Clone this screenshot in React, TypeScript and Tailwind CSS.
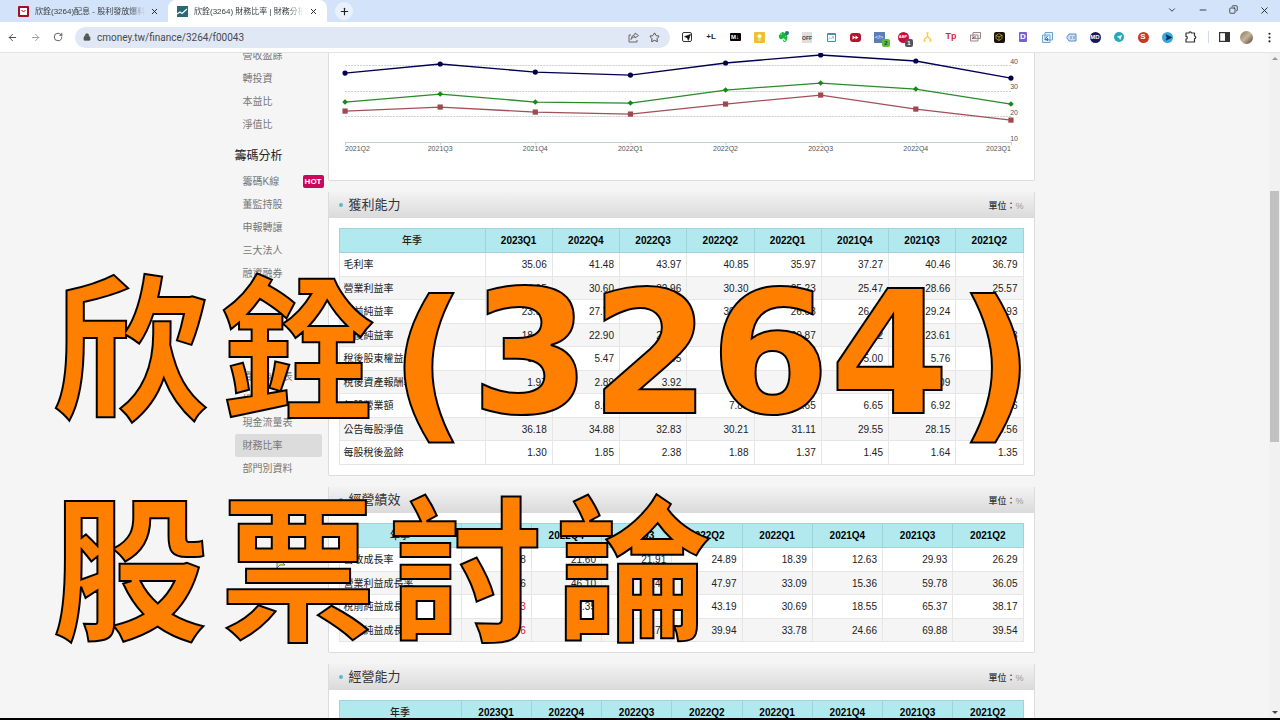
import type { ReactNode } from "react";
import {
  ArrowLeft, ArrowRight, RotateCw, Lock, Star, X, Plus, Minus, ChevronDown, Copy,
  EllipsisVertical, Send, Lightbulb, TrendingUp, Box,
} from "lucide-react";
import { SiEvernote } from "react-icons/si";

const quarters = ["2023Q1", "2022Q4", "2022Q3", "2022Q2", "2022Q1", "2021Q4", "2021Q3", "2021Q2"];

type Row = [string, ...string[]];

const profitability: Row[] = [
  ["毛利率", "35.06", "41.48", "43.97", "40.85", "35.97", "37.27", "40.46", "36.79"],
  ["營業利益率", "24.65", "30.60", "32.96", "30.30", "25.23", "25.47", "28.66", "25.57"],
  ["稅前純益率", "23.96", "27.74", "34.74", "30.47", "26.03", "26.40", "29.24", "26.93"],
  ["稅後純益率", "18.43", "22.90", "28.27", "23.85", "20.87", "21.62", "23.61", "22.23"],
  ["稅後股東權益報酬率", "3.68", "5.47", "7.45", "6.09", "4.44", "5.00", "5.76", "4.81"],
  ["稅後資產報酬率", "1.97", "2.89", "3.92", "3.28", "2.51", "2.67", "3.09", "2.61"],
  ["每股營業額", "7.11", "8.08", "8.46", "7.88", "6.65", "6.65", "6.92", "6.36"],
  ["公告每股淨值", "36.18", "34.88", "32.83", "30.21", "31.11", "29.55", "28.15", "26.56"],
  ["每股稅後盈餘", "1.30", "1.85", "2.38", "1.88", "1.37", "1.45", "1.64", "1.35"],
];

const performance: Row[] = [
  ["營收成長率", "6.98", "21.60", "21.91", "24.89", "18.39", "12.63", "29.93", "26.29"],
  ["營業利益成長率", "4.46", "46.10", "40.43", "47.97", "33.09", "15.36", "59.78", "36.05"],
  ["稅前純益成長率", "-1.33", "27.35", "45.90", "43.19", "30.69", "18.55", "65.37", "38.17"],
  ["稅後純益成長率", "-5.56", "28.25", "45.70", "39.94", "33.78", "24.66", "69.88", "39.54"],
];

const menu = [
  { heading: "", items: ["營收盈餘", "轉投資", "本益比", "淨值比"] },
  { heading: "籌碼分析", items: ["籌碼K線", "董監持股", "申報轉讓", "三大法人", "融資融券", "主力進出", "大戶籌碼"] },
  { heading: "財務分析", items: ["資產負債表", "損益表", "現金流量表", "財務比率", "部門別資料"] },
];

const chartX = [16, 111, 206, 301, 396, 491, 586, 681];
const navy = [20, 11, 19, 22, 10, 2, 8, 25];
const green = [49, 41, 49, 50, 37, 30, 36, 51];
const red = [58, 54, 59, 61, 51, 42, 56, 67];
const points = (ys: number[]) => ys.map((y, i) => `${chartX[i]},${y}`).join(" ");

function Chart() {
  return (
    <svg viewBox="0 0 704 127" className="block w-full" role="img" aria-label="獲利能力走勢">
      {[12, 38, 63].map((y) => (
        <line key={y} x1="16" x2="681" y1={y + 0.5} y2={y + 0.5} stroke="#cfcfd3" strokeDasharray="2 1" />
      ))}
      <path d="M16 89.5H681" stroke="#c8ccd4" />
      {chartX.map((x) => <path key={x} d={`M${x + 0.5} 89v3`} stroke="#c8ccd4" />)}
      <g fill="none" strokeWidth="1.3">
        <polyline points={points(navy)} stroke="#000050" />
        <polyline points={points(green)} stroke="#2a8a2a" />
        <polyline points={points(red)} stroke="#a05058" />
      </g>
      {chartX.map((x, i) => (
        <g key={x}>
          <circle cx={x} cy={navy[i]} r="2.6" fill="#000050" />
          <path d={`M${x} ${green[i] - 2.8}l2.8 2.8l-2.8 2.8l-2.8 -2.8z`} fill="#148a14" />
          <rect x={x - 2.6} y={red[i] - 2.6} width="5.2" height="5.2" fill="#a04850" />
        </g>
      ))}
      <g fontSize="7" fill="#555" fontFamily="Liberation Sans, sans-serif">
        {[...quarters].reverse().map((q, i) => (
          <text key={q} x={chartX[i]} y="98" textAnchor={i === 0 ? "start" : i === 7 ? "end" : "middle"}>{q}</text>
        ))}
        {[[40, 11], [30, 36], [20, 62], [10, 88]].map(([v, y]) => (
          <text key={v} x="688" y={y} textAnchor="end">{v}</text>
        ))}
      </g>
    </svg>
  );
}

function RatioTable({ rows, narrow }: { rows: Row[]; narrow?: boolean }) {
  return (
    <table className="w-full table-fixed border-collapse">
      <thead>
        <tr className="h-6 bg-[#b2e9ef]">
          <th className={`border border-[#9fd3d9] p-0 font-medium ${narrow ? "w-[122px]" : "w-[146px]"}`}>年季</th>
          {quarters.map((q) => <th key={q} className="border border-[#9fd3d9] p-0 font-bold text-black">{q}</th>)}
        </tr>
      </thead>
      <tbody>
        {rows.map(([label, ...values]) => (
          <tr key={label} className="h-6 even:h-[23px] even:bg-[#f5f5f5]">
            <th scope="row" className="whitespace-nowrap border border-[#e6e6e6] p-0 pl-1 text-left font-normal">{label}</th>
            {values.map((v, i) => (
              <td key={i} className={`border border-[#e6e6e6] p-0 pr-[5px] text-right ${v.startsWith("-") ? "text-[#d0103a]" : ""}`}>{v}</td>
            ))}
          </tr>
        ))}
      </tbody>
    </table>
  );
}

function Card({ title, children }: { title: string; children: ReactNode }) {
  return (
    <section className="rounded-b-[2px] border border-t-0 border-[#dcdcdc] bg-white">
      <header className="flex h-[26px] items-center justify-between bg-linear-to-b from-[#f3f3f3] to-[#dadada] px-[10px]">
        <h2 className="flex items-center gap-[6px] text-[13px] text-[#333]">
          <span className="size-1 rounded-full bg-[#5cb8cf]" />
          {title}
        </h2>
        <p className="pt-1 text-[9px] font-medium text-[#333]">單位：<span className="text-[#999]">%</span></p>
      </header>
      <div className="p-[10px]">{children}</div>
    </section>
  );
}

function Sidebar() {
  return (
    <nav className="-mt-[9px] w-[93px] shrink-0 text-[10px] text-[#777]">
      {menu.map((group) => (
        <div key={group.heading}>
          {group.heading && <h3 className="mt-2 mb-[2px] h-6 text-[12px] leading-6 text-[#222]">{group.heading}</h3>}
          <ul>
            {group.items.map((item) => (
              <li key={item} className="flex h-[23px] items-center justify-between pr-[4px]">
                <a
                  href="#menu"
                  className={item === "財務比率" ? "mr-[2px] flex-1 rounded-[2px] bg-[#dcdcdc] pl-2 leading-[23px]" : "pl-2"}
                >
                  {item}
                </a>
                {item === "籌碼K線" && (
                  <span className="rounded-[2px] bg-[#c9085c] px-[2px] text-[8px] leading-[13px] font-bold text-white">HOT</span>
                )}
              </li>
            ))}
          </ul>
        </div>
      ))}
    </nav>
  );
}

function Tab({ title, icon, active }: { title: string; icon: ReactNode; active?: boolean }) {
  return (
    <div className={`flex h-full w-[159px] items-center px-[9px] ${active ? "rounded-t-lg bg-white" : ""}`}>
      {icon}
      <span className="ml-[6px] min-w-0 flex-1 overflow-hidden mask-r-from-85% pt-[2px] text-[8px] leading-[14px] whitespace-nowrap text-[#3c4043]">{title}</span>
      <button aria-label="關閉分頁" className="ml-[5px]"><X size={9} strokeWidth={2.5} /></button>
    </div>
  );
}

function Tile({ className, children }: { className: string; children?: ReactNode }) {
  return <span className={`relative flex items-center justify-center ${className}`}>{children}</span>;
}

const extensions: { name: string; icon: ReactNode }[] = [
  { name: "傳送", icon: <Tile className="size-[10px] rounded-[2px] border border-[#333]"><Send size={7} fill="#111" /></Tile> },
  { name: "加入", icon: <Tile className="text-[8px] font-bold text-[#222]">+L</Tile> },
  { name: "Markdown", icon: <Tile className="h-[8px] w-[11px] rounded-[1px] bg-black text-[6px] font-bold text-white">M↓</Tile> },
  { name: "Keep", icon: <Tile className="size-[11px] rounded-[1px] bg-[#ecc02f] text-white"><Lightbulb size={7} fill="#fff" /></Tile> },
  { name: "Evernote", icon: <Tile className="text-[#18b83c]"><SiEvernote size={10} /><i className="absolute -top-[1px] -right-[1px] size-[4px] rounded-full bg-[#2f7187]" /></Tile> },
  { name: "OFF", icon: <Tile className="h-[11px] w-[10px] items-end bg-[#dedede] text-[5px] font-bold text-[#444]">OFF</Tile> },
  { name: "筆記", icon: <Tile className="size-[9px] rounded-[1px] border border-t-2 border-[#4a8fb2]"><TrendingUp size={6} color="#4a8fb2" /></Tile> },
  { name: "快轉", icon: <svg width="11" height="9" viewBox="0 0 11 9"><rect width="11" height="9" rx="3" fill="#b5122b" /><path d="M2.500 2.500l3 2-3 2zM5.500 2.500l3 2-3 2z" fill="#fff" /></svg> },
  { name: "程式碼", icon: <Tile className="size-[11px] bg-[#5b7db8] text-[6px] text-white">&lt;/&gt;<b className="absolute -right-[5px] -bottom-[4px] rounded-[2px] bg-[#5ebd3e] px-[2px] text-[6px] leading-[8px] text-[#143]">2</b></Tile> },
  { name: "AdBlock", icon: <Tile className="size-[11px] rounded-full bg-[#c70d3c] text-[4px] font-bold text-white">ABP<b className="absolute -right-[4px] -bottom-[4px] rounded-[2px] bg-[#555] px-[2px] text-[6px] leading-[8px]">1</b></Tile> },
  { name: "分支", icon: <svg width="9" height="10" viewBox="0 0 9 10" fill="none" stroke="#efce45" strokeWidth="1.3"><path d="M4.5 1v3.500L1.500 7v2M4.500 4.500L7.500 7v2M3.500 1h2M.500 9h2M6.500 9h2" /></svg> },
  { name: "Tp", icon: <Tile className="text-[9px] font-bold text-[#d52b3e]">Tp</Tile> },
  { name: "圖庫", icon: <svg width="11" height="10" viewBox="0 0 11 10" fill="#f5f0ee" stroke="#9a8c8c"><path d="M3 .5h7.500v6H3zM.500 3h7.500v6H.500z" /><path d="M2 7l2-2h2" stroke="#a04848" fill="none" /></svg> },
  { name: "方塊", icon: <Tile className="size-[11px] rounded-[2px] bg-[#16130c] text-[#e2bd35]"><Box size={8} /></Tile> },
  { name: "D", icon: <Tile className="h-[10px] w-[8px] rounded-[1px] bg-[#7b5fd0] text-[8px] font-bold text-white">D</Tile> },
  { name: "翻譯", icon: <svg width="11" height="11" viewBox="0 0 11 11" fill="#e6f3fc" stroke="#6ca5d4"><path d="M3 .5h7.500V8H3zM.500 3H8v7.500H.500z" /><path d="M5.500 4L3 7.500h3.500M5.500 6v3" fill="none" stroke="#397bb5" /></svg> },
  { name: "標籤", icon: <svg width="11" height="9" viewBox="0 0 11 9" fill="#cfe0f5" stroke="#5a8cc7"><path d="M.7 4.5L3 1h7v7H3zM5 3v3M8 3v3" /></svg> },
  { name: "MD", icon: <Tile className="size-[11px] rounded-full bg-[#1b1560] text-[6px] font-bold text-white">MD</Tile> },
  { name: "Telegram", icon: <Tile className="size-[10px] rounded-full bg-[#22a9bd] text-white"><Send size={5} fill="#fff" /></Tile> },
  { name: "S", icon: <Tile className="size-[11px] rounded-full bg-[#cf3425] text-[8px] font-bold text-white">S</Tile> },
  { name: "播放", icon: <Tile className="size-[11px] rounded-full bg-[#3aa8d8] text-[#12305c]"><Send size={7} fill="#12305c" className="rotate-45" /></Tile> },
  { name: "擴充功能", icon: <svg width="12" height="12" viewBox="0 0 12 12" fill="none" stroke="#333" strokeWidth="1.200" strokeLinejoin="round"><path d="M1 2h3a1.200 1.200 0 0 1 2.400 0H9.500v3a1.300 1.300 0 0 1 0 2.600V11H1V8a1.300 1.300 0 0 0 0-2.600z" /></svg> },
];

function Browser() {
  return (
    <header className="shrink-0 border-b border-[#e3e3e6]">
      <div className="flex h-[22px] items-center bg-[#d3e3fa] pl-[9px]">
        <Tab
          title="欣銓(3264)配息 - 股利發放爆料"
          icon={
            <svg width="11" height="11" viewBox="0 0 11 11"><rect width="11" height="11" rx="1" fill="#a31222" /><rect x="2" y="2" width="7" height="7" fill="#fff" /><path d="M3.5 4l2 2 2-2" stroke="#a31222" fill="none" /></svg>
          }
        />
        <Tab
          active
          title="欣銓(3264) 財務比率 | 財務分析"
          icon={
            <svg width="11" height="11" viewBox="0 0 11 11"><rect width="11" height="11" fill="#276b76" /><path d="M0 8L3 6l2 1.500L10 3" stroke="#fff" strokeWidth="1.200" fill="none" /></svg>
          }
        />
        <button aria-label="新分頁" className="ml-[8px] flex size-[18px] items-center justify-center rounded-full bg-[#e9f1fd]"><Plus size={11} strokeWidth={2.5} /></button>
        <div className="ml-auto flex pb-[2px] text-[#222]">
          <button aria-label="搜尋分頁" className="flex w-[30px] justify-center"><ChevronDown size={10} /></button>
          <button aria-label="最小化" className="flex w-[31px] justify-center"><Minus size={10} /></button>
          <button aria-label="還原" className="flex w-[31px] justify-center"><Copy size={9} className="-scale-x-100" /></button>
          <button aria-label="關閉" className="flex w-[31px] justify-center"><X size={11} /></button>
        </div>
      </div>
      <div className="flex h-[30px] items-center bg-white pr-1">
        <button aria-label="上一頁" className="flex w-[25px] justify-center"><ArrowLeft size={11} color="#444" /></button>
        <button aria-label="下一頁" className="flex w-[21px] justify-center"><ArrowRight size={11} color="#999" /></button>
        <button aria-label="重新載入" className="flex w-6 justify-center"><RotateCw size={10} color="#444" /></button>
        <div className="ml-[5px] flex h-[21px] flex-1 items-center rounded-full bg-[#e1e8f5] pr-[10px] pl-[8px]">
          <Lock size={8} fill="#555" color="#555" />
          <input
            aria-label="網址列"
            defaultValue="cmoney.tw/finance/3264/f00043"
            className="ml-[6px] min-w-0 flex-1 bg-transparent font-[Roboto,sans-serif] text-[10px] text-[#45494f] outline-none"
          />
          <button aria-label="分享" className="mr-[10px]">
            <svg width="11" height="11" viewBox="0 0 11 11" fill="none" stroke="#666" strokeLinejoin="round"><path d="M3 3H1v7h8V8M7 1l3.500 2.500L7 6V4.500Q4.500 4.500 3 7.500Q3.500 3 7 2.500z" /></svg>
          </button>
          <button aria-label="加入書籤"><Star size={11} color="#444" /></button>
        </div>
        <div className="ml-[5px] flex">
          {extensions.map((e) => (
            <button key={e.name} aria-label={e.name} className="flex h-5 w-6 items-center justify-center font-['Liberation_Sans',sans-serif]">{e.icon}</button>
          ))}
        </div>
        <i className="ml-[5px] h-3 w-px bg-[#cfdcf0]" />
        <button aria-label="側邊面板" className="ml-[10px]">
          <svg width="11" height="10" viewBox="0 0 11 10"><rect x=".6" y=".6" width="9.800" height="8.800" fill="#fff" stroke="#333" strokeWidth="1.200" /><path d="M6 1h4v8H6z" fill="#333" /></svg>
        </button>
        <span className="ml-[10px] size-[13px] rounded-full bg-linear-to-br from-[#8a7a62] via-[#c4b49a] to-[#4a4236]" />
        <button aria-label="選單" className="ml-[10px]"><EllipsisVertical size={13} /></button>
      </div>
    </header>
  );
}

export default function App() {
  return (
    <div className="relative flex h-screen flex-col overflow-hidden border-b-2 border-black bg-[#f5f5f5] font-['Liberation_Sans','Noto_Sans_CJK_TC',sans-serif] text-[10px] text-[#222]">
      <Browser />
      <div className="flex min-h-0 flex-1">
        <main className="min-w-0 flex-1 overflow-hidden">
          <div className="mx-auto flex max-w-[800px]">
            <Sidebar />
            <div className="flex min-w-0 flex-1 flex-col gap-[11px]">
              <section className="rounded-b-[2px] border border-t-0 border-[#dcdcdc] bg-white"><Chart /></section>
              <Card title="獲利能力"><RatioTable rows={profitability} /></Card>
              <Card title="經營績效"><RatioTable rows={performance} narrow /></Card>
              <Card title="經營能力"><RatioTable rows={[]} narrow /></Card>
            </div>
          </div>
        </main>
        <div className="flex w-[11px] flex-col items-center justify-between bg-[#f1f1f1] py-1">
          <i className="border-x-[3px] border-b-[3px] border-x-transparent border-b-[#999]" />
          <i className="mb-[138px] h-[251px] w-[9px] bg-[#c1c1c1]" />
          <i className="border-x-[3px] border-t-[3px] border-x-transparent border-t-[#444]" />
        </div>
      </div>
      <svg className="absolute top-[556px] left-[276px]" width="9" height="13" viewBox="0 0 9 13"><path d="M1 1v11l3-3h5z" fill="#e6f04a" stroke="#555" strokeWidth=".8" /></svg>
      <h1 className="absolute top-[243px] left-[46px] font-['DejaVu_Sans','Noto_Sans_CJK_TC',sans-serif] text-[156px] leading-[221px] font-bold whitespace-nowrap text-[#ff7f00] [-webkit-text-stroke:2px_#000]">
        <span className="flex">
          {[..."欣銓"].map((c) => <span key={c} className="w-[168px] text-center">{c}</span>)}
          <span className="pt-5 pl-2 text-[168px] leading-[201px]">(</span>
          <span className="pl-1 text-[172px]">3264</span>
          <span className="pt-5 pl-2 text-[168px] leading-[201px]">)</span>
        </span>
        <span className="flex">
          {[..."股票討論"].map((c) => <span key={c} className="w-[168px] text-center">{c}</span>)}
        </span>
      </h1>
    </div>
  );
}
